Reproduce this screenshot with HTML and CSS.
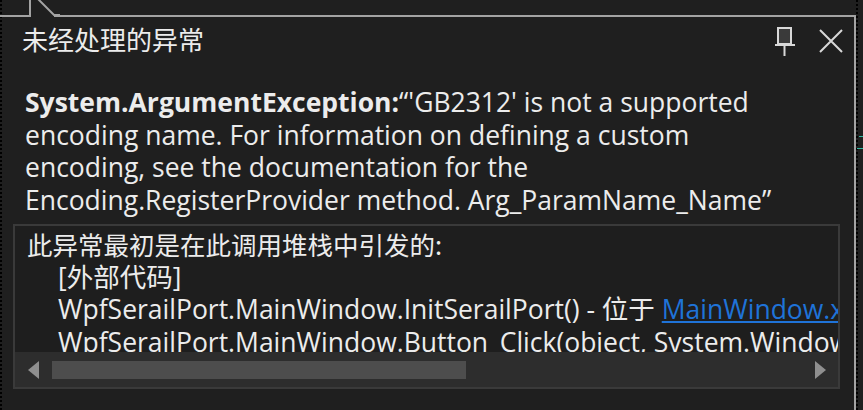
FILE: index.html
```html
<!DOCTYPE html>
<html lang="zh-CN">
<head>
<meta charset="utf-8">
<title>未经处理的异常</title>
<link rel="stylesheet" href="styles.css">
</head>
<body>
<div class="screen">
  <svg class="pointer" width="60" height="18" viewBox="0 0 60 18" aria-hidden="true">
    <rect x="31" y="13" width="23" height="5" fill="#1f1f1f"/>
    <path d="M30 0 V16 H0" fill="none" stroke="#a3a3a3" stroke-width="2"/>
    <path d="M38 -1 L54 15 H60" fill="none" stroke="#a3a3a3" stroke-width="2"/>
  </svg>
  <div class="dialog">
    <header class="titlebar">
      <h1 class="title">未经处理的异常</h1>
      <div class="actions">
        <svg class="icon pin" width="22" height="30" viewBox="0 0 22 30" aria-hidden="true">
          <rect x="4" y="1" width="13" height="16" fill="#3a3a3a" stroke="#d8d8d8" stroke-width="2"/>
          <path d="M1 18 H21" stroke="#d8d8d8" stroke-width="2"/>
          <path d="M10.5 18 V29" stroke="#d8d8d8" stroke-width="2"/>
        </svg>
        <svg class="icon close" width="26" height="26" viewBox="0 0 26 26" aria-hidden="true">
          <path d="M2 2 L24 24 M24 2 L2 24" stroke="#d8d8d8" stroke-width="2"/>
        </svg>
      </div>
    </header>
    <p class="message"><b>System.ArgumentException:</b>“'GB2312' is not a supported<br>encoding name. For information on defining a custom<br>encoding, see the documentation for the<br>Encoding.RegisterProvider method. Arg_ParamName_Name”</p>
    <div class="stack">
      <div class="stack-text">
        <div class="line cjk">此异常最初是在此调用堆栈中引发的:</div>
        <div class="line indent">[外部代码]</div>
        <div class="line indent">WpfSerailPort.MainWindow.InitSerailPort() - 位于 <a class="link" href="#">MainWindow.xaml.cs</a></div>
        <div class="line indent">WpfSerailPort.MainWindow.Button_Click(object, System.Windows.RoutedEventArgs)</div>
      </div>
      <div class="hscroll">
        <span class="arrow left"></span>
        <div class="track"><div class="thumb"></div></div>
        <span class="arrow right"></span>
      </div>
    </div>
  </div>
  <div class="side">
    <span class="mark m1"></span>
    <span class="mark m2"></span>
  </div>
</div>
</body>
</html>
```
FILE: styles.css
```css
html, body {
  margin: 0;
  padding: 0;
  background: #1f1f1f;
}
body {
  width: 863px;
  height: 410px;
  overflow: hidden;
  font-family: "Open Sans", "Noto Sans CJK SC", sans-serif;
  color: #ececec;
}
.screen {
  position: relative;
  display: flex;
  width: 863px;
  height: 410px;
  border-left: 2px dotted #000;
  box-sizing: border-box;
}
.pointer {
  position: absolute;
  left: -2px;
  top: 0;
}
.dialog {
  margin-top: 15px;
  width: 854px;
  height: 395px;
  border-top: 2px solid #a3a3a3;
  border-right: 2px solid #a3a3a3;
  display: flex;
  flex-direction: column;
  box-sizing: border-box;
}
.titlebar {
  display: flex;
  align-items: center;
  justify-content: space-between;
  padding: 2px 10px 0 20px;
  height: 40px;
}
.title {
  margin: 0;
  font-family: "Noto Sans CJK SC", sans-serif;
  font-weight: 400;
  font-size: 26px;
  line-height: 32px;
  color: #ececec;
}
.actions {
  display: flex;
  align-items: flex-start;
  gap: 22px;
  padding-top: 4px;
}
.pin { margin-top: 1px; }
.close { margin-top: 2px; }
.message {
  margin: 27px 0 0 0;
  padding: 0 20px 0 23px;
  font-size: 26.5px;
  line-height: 32.5px;
  white-space: nowrap;
  color: #ececec;
}
.message b {
  font-weight: 700;
}
.stack {
  margin: 8px 0 0 11px;
  width: 827px;
  border: 2px solid #3a3a3a;
  background: #1e1e1e;
  display: flex;
  flex-direction: column;
  box-sizing: border-box;
}
.stack-text {
  height: 126px;
  box-sizing: border-box;
  padding-top: 2px;
  overflow: hidden;
  padding-left: 12px;
  white-space: nowrap;
  font-size: 26.5px;
  line-height: 32.5px;
}
.line {
  height: 32.5px;
}
.line.cjk {
  font-family: "Noto Sans CJK SC", sans-serif;
  font-size: 25.5px;
}
.indent {
  padding-left: 31px;
}
.link {
  color: #1f73d8;
  text-decoration: underline;
}
.hscroll {
  height: 35px;
  background: #2d2d2d;
  display: flex;
  align-items: center;
  padding: 0 12px 0 13px;
}
.arrow {
  width: 0;
  height: 0;
  border-top: 9px solid transparent;
  border-bottom: 9px solid transparent;
}
.arrow.left {
  border-right: 11px solid #8f8f8f;
}
.arrow.right {
  border-left: 11px solid #8f8f8f;
}
.track {
  flex: 1;
  height: 18px;
  margin: 0 13px;
}
.thumb {
  width: 414px;
  height: 18px;
  background: #4d4d4d;
}
.side {
  position: relative;
  flex: 1;
  border-left: 2px dotted #000;
}
.mark {
  position: absolute;
  height: 1px;
  background: #2fb5a0;
}
.m1 { top: 136px; left: 1px; width: 6px; }
.m2 { top: 148px; left: -1px; width: 8px; }
```
